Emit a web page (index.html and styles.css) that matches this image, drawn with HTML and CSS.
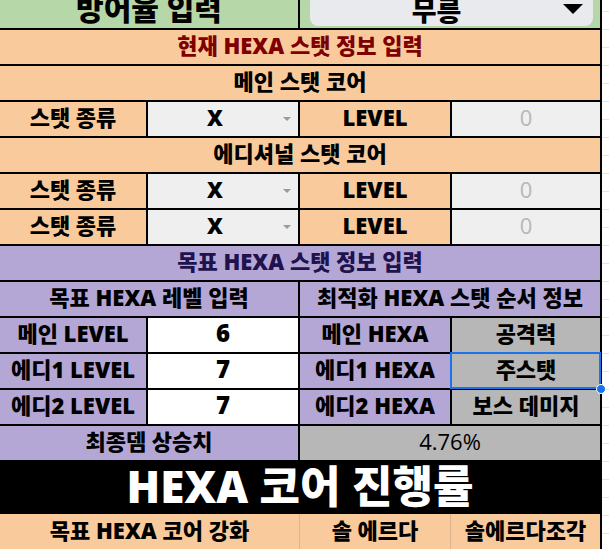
FILE: index.html
```html
<!DOCTYPE html>
<html lang="ko">
<head>
<meta charset="utf-8">
<title>HEXA</title>
<link rel="stylesheet" href="styles.css">
</head>
<body>
<div class="sheet">
  <div class="grid">
    <div class="c green big first span2">방어율 입력</div>
    <div class="green first span2 dd-cell">
      <div class="dd"><span class="dd-text">무릉</span><span class="dd-tri"></span></div>
    </div>

    <div class="c orange span4 red">현재 HEXA 스탯 정보 입력</div>
    <div class="c orange span4">메인 스탯 코어</div>
    <div class="c orange">스탯 종류</div>
    <div class="c lgray pick">X<span class="pick-arrow"></span></div>
    <div class="c orange">LEVEL</div>
    <div class="c lgray muted">0</div>

    <div class="c orange span4">에디셔널 스탯 코어</div>
    <div class="c orange">스탯 종류</div>
    <div class="c lgray pick">X<span class="pick-arrow"></span></div>
    <div class="c orange">LEVEL</div>
    <div class="c lgray muted">0</div>
    <div class="c orange">스탯 종류</div>
    <div class="c lgray pick">X<span class="pick-arrow"></span></div>
    <div class="c orange">LEVEL</div>
    <div class="c lgray muted">0</div>

    <div class="c purple span4 navy">목표 HEXA 스탯 정보 입력</div>
    <div class="c purple span2">목표 HEXA 레벨 입력</div>
    <div class="c purple span2">최적화 HEXA 스탯 순서 정보</div>

    <div class="c purple">메인 LEVEL</div>
    <div class="c white num">6</div>
    <div class="c purple">메인 HEXA</div>
    <div class="c dgray">공격력</div>

    <div class="c purple">에디1 LEVEL</div>
    <div class="c white num">7</div>
    <div class="c purple">에디1 HEXA</div>
    <div class="c dgray selected">주스탯<span class="sel-dot"></span></div>

    <div class="c purple">에디2 LEVEL</div>
    <div class="c white num">7</div>
    <div class="c purple">에디2 HEXA</div>
    <div class="c dgray">보스 데미지</div>

    <div class="c purple span2">최종뎀 상승치</div>
    <div class="c dgray span2 light">4.76%</div>

    <div class="c banner span4">HEXA 코어 진행률</div>
  </div>
  <div class="bottom">
    <div class="c bcell">목표 HEXA 코어 강화</div>
    <div class="c bcell">솔 에르다</div>
    <div class="c bcell last">솔에르다조각</div>
  </div>
</div>
</body>
</html>
```

FILE: styles.css
```css
* {
  box-sizing: border-box;
}

html {
  background-color: #fff;
  background-image: repeating-linear-gradient(to bottom, transparent 0, transparent 11px, #e2e2e2 11px, #e2e2e2 12px, transparent 12px, transparent 18px);
}

body {
  margin: 0;
  font-family: "Open Sans", "Noto Sans CJK KR", sans-serif;
  font-weight: 800;
  font-size: 22px;
  color: #000;
  overflow: hidden;
}

.sheet {
  width: 602px;
  margin-top: -8px;
}

.grid {
  display: grid;
  grid-template-columns: 146px 150px 150px 148px;
  grid-auto-rows: minmax(34px, auto);
  gap: 2px;
  background: #000;
  padding-right: 2px;
}

.c {
  display: flex;
  align-items: center;
  justify-content: center;
  white-space: nowrap;
  line-height: 1;
  padding-bottom: 4px;
}

.span2 { grid-column: span 2; }
.span4 { grid-column: span 4; }

.first { height: 36px; }

.green { background: #b6d7a8; }
.orange { background: #f9cb9c; }
.purple { background: #b4a7d6; }
.lgray { background: #efefef; }
.dgray { background: #b7b7b7; }
.white { background: #fff; }

.big {
  font-size: 30px;
  padding-bottom: 2px;
}

.red { color: #7f0000; }
.navy { color: #20124d; }

.muted {
  color: #b7b7b7;
  font-weight: 400;
}

.num { font-size: 24px; }

.light { font-weight: 500; }

.dd-cell {
  display: flex;
  padding: 2px 7px 2px 10px;
}

.dd {
  flex: 1;
  display: flex;
  align-items: center;
  background: #e9eaee;
  border-radius: 8px;
  padding-right: 10px;
}

.dd-text {
  flex: 1;
  text-align: center;
  font-size: 27px;
  line-height: 1;
}

.dd-tri {
  width: 0;
  height: 0;
  border-left: 10px solid transparent;
  border-right: 10px solid transparent;
  border-top: 10px solid #000;
  margin-top: -2px;
}

.pick {
  position: relative;
  padding-right: 16px;
}

.pick-arrow {
  position: absolute;
  right: 7px;
  top: 50%;
  margin-top: -2px;
  width: 0;
  height: 0;
  border-left: 4px solid transparent;
  border-right: 4px solid transparent;
  border-top: 4px solid #9a9a9a;
}

.selected {
  position: relative;
}

.selected::after {
  content: "";
  position: absolute;
  top: -2px;
  left: -2px;
  right: -1px;
  bottom: -1px;
  border: 2px solid #1a73e8;
  pointer-events: none;
}

.sel-dot {
  position: absolute;
  right: -6px;
  bottom: -6px;
  width: 10px;
  height: 10px;
  border-radius: 50%;
  background: #1a73e8;
  border: 1px solid #fff;
  z-index: 2;
}

.banner {
  height: 52px;
  background: #000;
  color: #fff;
  font-size: 44px;
}

.bottom {
  display: grid;
  grid-template-columns: 300px 151px 149px;
  height: 36px;
  background: #f9cb9c;
  border-right: 2px solid #000;
}

.bcell {
  border-right: 1px solid #dcb48d;
}

.bcell.last {
  border-right: 0;
}
```
